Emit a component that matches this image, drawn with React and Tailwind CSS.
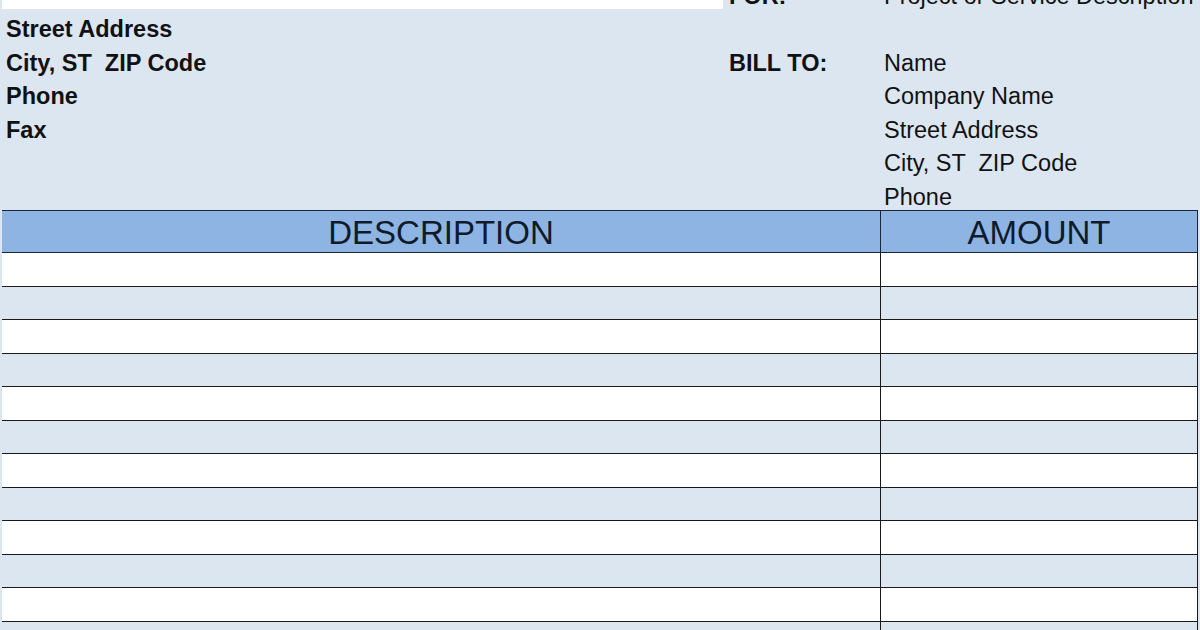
import React from "react";

function InfoRow({ left, mid, right, white }) {
  return (
    <div className="flex h-[33.5px] items-end whitespace-pre">
      <div className={`w-[721px] h-full flex items-end pl-[4px] pb-[1px] font-bold ${white ? "bg-white" : ""}`}>
        {left}
      </div>
      <div className="w-[157px] h-full flex items-end pl-[6px] pb-[1px] font-bold">{mid}</div>
      <div className="flex-1 h-full flex items-end pl-[4px] pb-[1px] overflow-hidden">{right}</div>
    </div>
  );
}

export default function App() {
  const rows = Array.from({ length: 12 }, (_, i) => i);
  return (
    <div className="w-[1200px] h-[630px] overflow-hidden bg-[#dce6f1] font-['Liberation_Sans',Arial,sans-serif] text-[#111]">
      <div className="px-[2px]">
        <div className="-mt-[24.5px] text-[23.5px] leading-none">
          <InfoRow left="" mid="FOR:" right="Project or Service Description" white />
          <InfoRow left="Street Address" mid="" right="" />
          <InfoRow left="City, ST  ZIP Code" mid="BILL TO:" right="Name" />
          <InfoRow left="Phone" mid="" right="Company Name" />
          <InfoRow left="Fax" mid="" right="Street Address" />
          <InfoRow left="" mid="" right="City, ST  ZIP Code" />
          <InfoRow left="" mid="" right="Phone" />
        </div>
        <div className="border-t border-[#1c2533]">
          <div className="flex h-[42px] bg-[#8db4e2] border-b border-[#1c2533] text-[33px] text-[#0f1a2b] leading-none">
            <div className="w-[879px] border-r border-[#1c2533] flex items-center justify-center pt-[1px]">DESCRIPTION</div>
            <div className="flex-1 border-r border-[#1c2533] flex items-center justify-center pt-[1px]">AMOUNT</div>
          </div>
          {rows.map((i) => (
            <div
              key={i}
              className={`flex h-[33.5px] border-b border-[#1a1a1a] ${i % 2 === 0 ? "bg-white" : "bg-[#dce6f1]"}`}
            >
              <div className="w-[879px] border-r border-[#1a1a1a]"></div>
              <div className="flex-1 border-r border-[#1a1a1a]"></div>
            </div>
          ))}
        </div>
      </div>
    </div>
  );
}
